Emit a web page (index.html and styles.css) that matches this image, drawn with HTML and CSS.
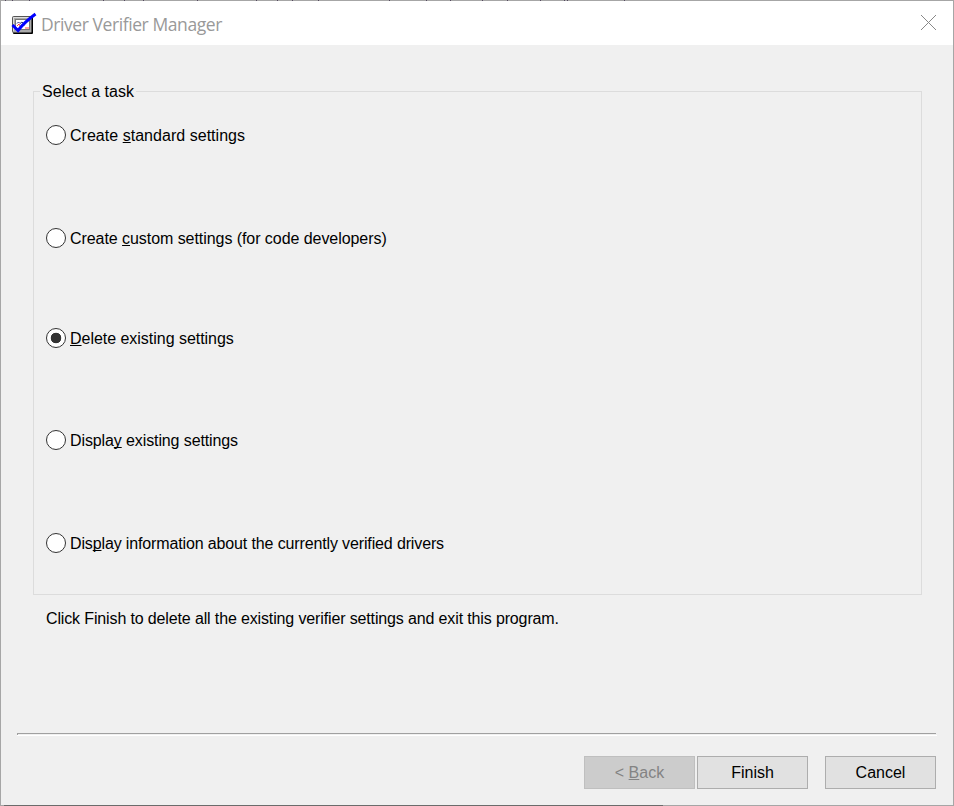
FILE: index.html
```html
<!DOCTYPE html>
<html lang="en">
<head>
<meta charset="utf-8">
<title>Driver Verifier Manager</title>
<link rel="stylesheet" href="styles.css">
</head>
<body>
<main class="window">
  <svg class="edge" width="954" height="1" viewBox="0 0 954 1" shape-rendering="crispEdges"><path d="M5 .5h1m6 0h1m16 0h1m73 0h1m20 0h1m18 0h1m53 0h1m58 0h1m20 0h1m14 0h1m25 0h1m70 0h1m36 0h1m23 0h1m31 0h1m24 0h1m32 0h1m23 0h1m2 0h1m56 0h1" stroke="#53485f"/></svg>
  <header class="titlebar">
    <svg class="app-icon" width="26" height="24" viewBox="0 0 26 24">
      <rect x="2" y="5" width="20" height="17" rx="1" fill="#000"/>
      <rect x="1.500" y="4.500" width="19" height="16" rx="1" fill="#aaa" stroke="#555"/>
      <path d="M2.500 19V5.500H20" fill="none" stroke="#ddd"/>
      <rect x="4.500" y="7.500" width="14" height="10" fill="#fff" stroke="#777"/>
      <path d="M6 11.500l1.500-1.500 1.500 1.500 2-1.500 1.500 1.500 2-1.500" fill="none" stroke="#338"/>
      <path d="M6 14l2-2 1.500 3 2-3 2 2M14 16h4" fill="none" stroke="#f44"/>
      <path d="M1.500 13l5.500 5.500C10 14.500 15 9 24.500 2" fill="none" stroke="#00f" stroke-width="3"/>
    </svg>
    <h1 class="title">Driver Verifier Manager</h1>
    <svg class="close" width="15" height="15" viewBox="0 0 15 15"><path d="M0 0l15 15M15 0L0 15" fill="none" stroke="#888"/></svg>
  </header>
  <section class="content">
    <fieldset class="tasks">
      <legend>Select a task</legend>
      <div class="task-list">
        <label class="task"><input type="radio" name="task"><span class="standard">Create <u>s</u>tandard settings</span></label>
        <label class="task"><input type="radio" name="task"><span class="custom">Create <u>c</u>ustom settings (for code developers)</span></label>
        <label class="task"><input type="radio" name="task" checked><span class="delete"><u>D</u>elete existing settings</span></label>
        <label class="task"><input type="radio" name="task"><span class="display">Displa<u>y</u> existing settings</span></label>
        <label class="task"><input type="radio" name="task"><span class="info">Dis<u>p</u>lay information about the currently verified drivers</span></label>
      </div>
    </fieldset>
    <p class="hint">Click Finish to delete all the existing verifier settings and exit this program.</p>
  </section>
  <footer class="footer">
    <button class="button" disabled>&lt; <u>B</u>ack</button>
    <button class="button">Finish</button>
    <button class="button cancel">Cancel</button>
  </footer>
</main>
</body>
</html>
```
FILE: styles.css
```css
* { box-sizing: border-box; }
body { margin: 0; overflow: hidden; font: 16px/20px "Liberation Sans", Arial, sans-serif; color: #000; }
.window { position: relative; width: 954px; height: 806px; border: 1px solid #a6a6a6; background: #f0f0f0; display: flex; flex-direction: column; }
.window::after { content: ""; position: absolute; left: 3px; bottom: -1px; width: 659px; height: 1px; background: #6b6b6b; }
.edge { position: absolute; top: -1px; left: -1px; }
.titlebar { height: 44px; background: #fff; display: flex; align-items: center; padding: 0 17px 0 10px; flex: none; }
.app-icon { margin-top: 2px; flex: none; }
.title { margin: 1px 0 0 4px; font: 400 17.5px/24px "Open Sans", "Noto Sans", sans-serif; letter-spacing: -.42px; color: #999; white-space: nowrap; }
.close { margin: -1px 0 0 auto; }
.content { flex: none; height: 688px; padding: 37px 31px 0 32px; }
.tasks { margin: 0; padding: 24px 12px 0; border: 1px solid #dcdcdc; width: 889px; height: 513px; min-width: 0; }
.tasks legend { padding: 0 2px; margin-left: -6px; height: 19px; line-height: 19px; letter-spacing: .04px; }
.task-list { display: grid; grid-template-rows: 103px 100px 102px 103px 20px; }
.task { display: flex; align-items: flex-start; white-space: nowrap; }
.task span { margin: 1px 0 0 4px; }
.standard { letter-spacing: .03px; }
.custom { letter-spacing: -.06px; }
.delete { letter-spacing: -.03px; }
.display { letter-spacing: -.11px; }
.info { letter-spacing: -.135px; }
input { appearance: none; margin: 0; width: 20px; height: 20px; flex: none; border: 1px solid #333; border-radius: 50%; background: #fff; }
input:checked { background: radial-gradient(circle, #333 5px, #fff 5.6px); }
u { text-underline-offset: 1px; text-decoration-thickness: 1px; text-decoration-skip-ink: none; }
.hint { margin: 14px 0 0 13px; white-space: nowrap; letter-spacing: -.137px; }
.footer { flex: none; margin: 0 16px; padding: 22px 1px 0 0; background: linear-gradient(#a0a0a0, #a0a0a0) 0 0 / calc(100% - 1px) 1px no-repeat, linear-gradient(#a0a0a0, #a0a0a0) 0 1px / 1px 1px no-repeat, linear-gradient(#fff, #fff) 0 2px / 100% 1px no-repeat; border-top: 0; padding-top: 23px; display: flex; justify-content: flex-end; gap: 2px; }
.button { width: 111px; height: 33px; padding: 0; border: 1px solid #adadad; background: #e1e1e1; font: inherit; color: #000; }
.button:disabled { background: #ccc; border-color: #bfbfbf; color: #838383; }
.cancel { margin-left: 15px; }
```
